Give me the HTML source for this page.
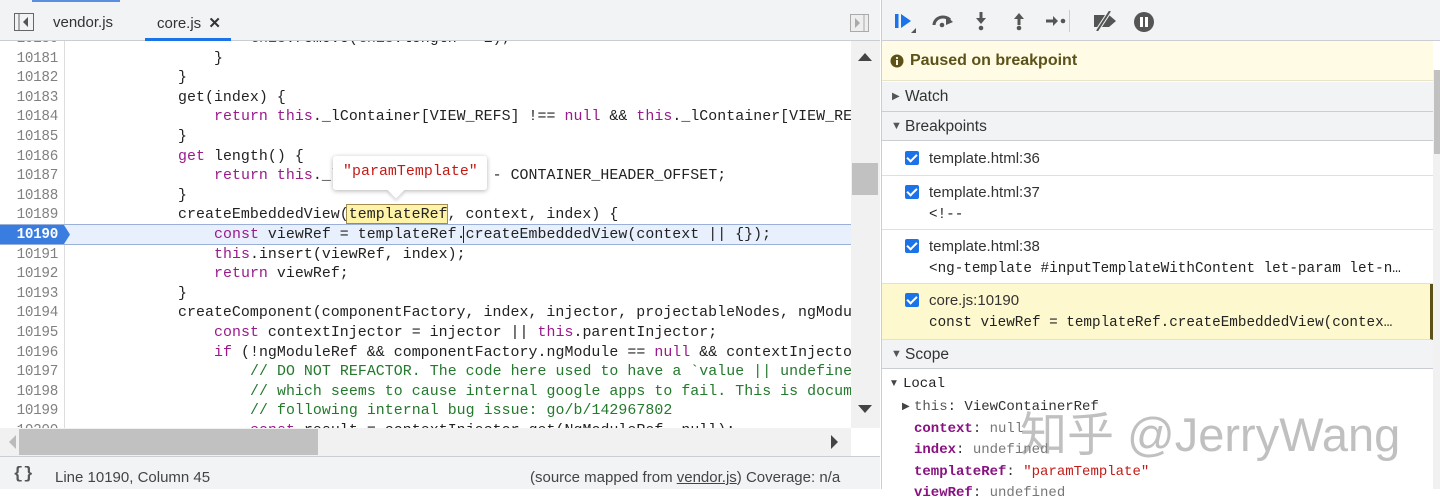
<!DOCTYPE html>
<html><head><meta charset="utf-8"><style>
*{margin:0;padding:0;box-sizing:border-box}
body{width:1440px;height:489px;overflow:hidden;background:#fff;font-family:"Liberation Sans",sans-serif;position:relative;color:#333}
.abs{position:absolute}
.mono{font-family:"Liberation Mono",monospace}
#tabs{left:0;top:0;width:880px;height:41px;background:#f1f3f4;border-bottom:1px solid #cacdd1}
.tab{top:14px;font-size:15px;color:#333}
#code{left:0;top:41px;width:851px;height:387px;overflow:hidden;background:#fff}
.ln{position:absolute;left:0;width:64px;text-align:right;padding-right:6px;font-size:14.3px;color:#808080;font-family:"Liberation Mono",monospace;height:19.6px;line-height:19.6px;letter-spacing:-0.3px}
.cl{position:absolute;font-size:14.9px;white-space:pre;font-family:"Liberation Mono",monospace;height:19.6px;line-height:19.6px;color:#222;letter-spacing:0.05px}
.k{color:#9a1a8c}.s{color:#c41a16}.c{color:#23792c}
.gut{left:64px;top:0;width:1px;height:387px;background:#ddd}
#vs{left:851px;top:41px;width:29px;height:387px;background:#f1f1f1}
#hs{left:0;top:428px;width:851px;height:28px;background:#f1f1f1}
#status{left:0;top:456px;width:880px;height:33px;background:#f1f3f4;border-top:1px solid #cacdd1;font-size:15px;color:#444}
#right{left:881px;top:0;width:559px;height:489px;border-left:1px solid #cacdd1;background:#fff}
.sec{position:absolute;left:0;width:551px;background:#f1f3f4;border-bottom:1px solid #cacdd1;font-size:15.5px;color:#333}
.cb{position:absolute;left:23px;width:14px;height:14px;background:#1a73e8;border-radius:2px}
.cb:after{content:"";position:absolute;left:4px;top:1px;width:4px;height:8px;border:solid #fff;border-width:0 2px 2px 0;transform:rotate(45deg)}
.bp{position:absolute;left:0;width:551px;border-bottom:1px solid #e0e0e0;background:#fff}
.bt{position:absolute;left:47px;font-size:15px;color:#333}
.bm{position:absolute;left:47px;font-size:14.3px;white-space:pre;color:#222;font-family:"Liberation Mono",monospace}
.sc{position:absolute;font-size:14px;font-family:"Liberation Mono",monospace;white-space:pre}
.sk{color:#881280;font-weight:bold}
</style></head><body>
<div id="tabs" class="abs">
 <svg class="abs" style="left:14px;top:13px" width="20" height="18"><rect x="0.5" y="0.5" width="19" height="17" fill="none" stroke="#666"/><line x1="5" y1="1" x2="5" y2="17" stroke="#666"/><path d="M14 4 L9 9 L14 14Z" fill="#555"/></svg>
 <div class="abs tab" style="left:53px">vendor.js</div>
 <div class="abs tab" style="left:157px">core.js <span style="font-weight:bold;margin-left:3px">✕</span></div>
 <div class="abs" style="left:145px;top:38px;width:86px;height:3px;background:#1a73e8"></div>
 <div class="abs" style="left:32px;top:0;width:88px;height:2px;background:#5b8ee0"></div>
 <svg class="abs" style="left:850px;top:14px" width="19" height="18"><rect x="0.5" y="0.5" width="18" height="17" fill="#eee" stroke="#aaa"/><line x1="14" y1="1" x2="14" y2="17" stroke="#aaa"/><path d="M5 4 L10 9 L5 14Z" fill="#aaa"/></svg>
</div>

<div id="code" class="abs">
 <div class="abs gut"></div>
 <div class="abs" style="left:0;top:183px;width:851px;height:21px;background:#e8f0fe;border-top:1px solid #9bb0d8;border-bottom:1px solid #9bb0d8"></div>
 <svg class="abs" style="left:0;top:184px" width="72" height="19"><path d="M0 0 H64 L70 9.5 L64 19 H0Z" fill="#3a7de0"/></svg>
 <div class="abs" style="left:346px;top:163px;width:102px;height:20px;background:#fff3a8;border:1px solid #a08c50"></div>
 <div class="abs" style="left:463px;top:185px;width:1px;height:17px;background:#222"></div>

 <div class="ln" style="top:-11px">10180</div><div class="cl" style="left:250px;top:-11px"><span class="k">this</span>.remove(<span class="k">this</span>.length - 1);</div>
 <div class="ln" style="top:8.6px">10181</div><div class="cl" style="left:214px;top:8.6px">}</div>
 <div class="ln" style="top:28.2px">10182</div><div class="cl" style="left:178px;top:28.2px">}</div>
 <div class="ln" style="top:47.8px">10183</div><div class="cl" style="left:178px;top:47.8px">get(index) {</div>
 <div class="ln" style="top:67.4px">10184</div><div class="cl" style="left:214px;top:67.4px"><span class="k">return</span> <span class="k">this</span>._lContainer[VIEW_REFS] !== <span class="k">null</span> &amp;&amp; <span class="k">this</span>._lContainer[VIEW_REFS]</div>
 <div class="ln" style="top:87px">10185</div><div class="cl" style="left:178px;top:87px">}</div>
 <div class="ln" style="top:106.6px">10186</div><div class="cl" style="left:178px;top:106.6px"><span class="k">get</span> length() {</div>
 <div class="ln" style="top:126.2px">10187</div><div class="cl" style="left:214px;top:126.2px"><span class="k">return</span> <span class="k">this</span>._lContainer.length - CONTAINER_HEADER_OFFSET;</div>
 <div class="ln" style="top:145.8px">10188</div><div class="cl" style="left:178px;top:145.8px">}</div>
 <div class="ln" style="top:165.4px">10189</div><div class="cl" style="left:178px;top:165.4px">createEmbeddedView(templateRef, context, index) {</div>
 <div class="ln" style="top:185px;color:#fff;font-weight:bold">10190</div><div class="cl" style="left:214px;top:185px"><span class="k">const</span> viewRef = templateRef.createEmbeddedView(context || {});</div>
 <div class="ln" style="top:204.6px">10191</div><div class="cl" style="left:214px;top:204.6px"><span class="k">this</span>.insert(viewRef, index);</div>
 <div class="ln" style="top:224.2px">10192</div><div class="cl" style="left:214px;top:224.2px"><span class="k">return</span> viewRef;</div>
 <div class="ln" style="top:243.8px">10193</div><div class="cl" style="left:178px;top:243.8px">}</div>
 <div class="ln" style="top:263.4px">10194</div><div class="cl" style="left:178px;top:263.4px">createComponent(componentFactory, index, injector, projectableNodes, ngModuleRef) {</div>
 <div class="ln" style="top:283px">10195</div><div class="cl" style="left:214px;top:283px"><span class="k">const</span> contextInjector = injector || <span class="k">this</span>.parentInjector;</div>
 <div class="ln" style="top:302.6px">10196</div><div class="cl" style="left:214px;top:302.6px"><span class="k">if</span> (!ngModuleRef &amp;&amp; componentFactory.ngModule == <span class="k">null</span> &amp;&amp; contextInjector) {</div>
 <div class="ln" style="top:322.2px">10197</div><div class="cl c" style="left:250px;top:322.2px">// DO NOT REFACTOR. The code here used to have a `value || undefined`</div>
 <div class="ln" style="top:341.8px">10198</div><div class="cl c" style="left:250px;top:341.8px">// which seems to cause internal google apps to fail. This is documented</div>
 <div class="ln" style="top:361.4px">10199</div><div class="cl c" style="left:250px;top:361.4px">// following internal bug issue: go/b/142967802</div>
 <div class="ln" style="top:381px">10200</div><div class="cl" style="left:250px;top:381px"><span class="k">const</span> result = contextInjector.get(NgModuleRef, null);</div>

 <div class="abs" style="left:333px;top:115px;width:154px;height:34px;background:#fff;border-radius:3px;box-shadow:0 1px 5px rgba(0,0,0,.3)"></div>
 <div class="abs" style="left:390px;top:143px;width:12px;height:12px;background:#fff;transform:rotate(45deg);box-shadow:2px 2px 3px rgba(0,0,0,.15)"></div>
 <div class="abs" style="left:333px;top:115px;width:154px;height:34px;background:#fff;border-radius:3px"></div>
 <div class="cl s" style="left:343px;top:122px">"paramTemplate"</div>
</div>

<div id="vs" class="abs">
 <svg class="abs" style="left:7px;top:11px" width="14" height="10"><path d="M0 9 L7 1 L14 9Z" fill="#444"/></svg>
 <div class="abs" style="left:1px;top:122px;width:26px;height:32px;background:#c1c1c1"></div>
 <svg class="abs" style="left:7px;top:363px" width="14" height="10"><path d="M0 1 L7 9 L14 1Z" fill="#444"/></svg>
</div>
<div id="hs" class="abs">
 <svg class="abs" style="left:9px;top:7px" width="8" height="14"><path d="M7 0 L0 7 L7 14Z" fill="#bbb"/></svg>
 <div class="abs" style="left:19px;top:1px;width:299px;height:26px;background:#c1c1c1"></div>
 <svg class="abs" style="left:831px;top:7px" width="8" height="14"><path d="M0 0 L7 7 L0 14Z" fill="#444"/></svg>
</div>
<div id="status" class="abs">
 <div class="abs" style="left:13px;top:8px;font-size:17px;font-weight:bold;color:#555;font-family:'Liberation Mono',monospace">{}</div>
 <div class="abs" style="left:55px;top:12px">Line 10190, Column 45</div>
 <div class="abs" style="left:530px;top:12px">(source mapped from <u>vendor.js</u>) Coverage: n/a</div>
</div>

<div id="right" class="abs">
 <div class="abs" style="left:0;top:0;width:559px;height:41px;background:#f1f3f4;border-bottom:1px solid #cacdd1"></div>
 <svg class="abs" style="left:12px;top:12px" width="24" height="22"><rect x="1" y="2" width="3.5" height="14" fill="#1a73e8"/><path d="M7 2 L17 9 L7 16Z" fill="#1a73e8"/><path d="M22 16 L22 21 L17 21Z" fill="#555"/></svg>
 <svg class="abs" style="left:49px;top:13px" width="24" height="16"><path d="M3 12 A9 8 0 0 1 19 7" fill="none" stroke="#555" stroke-width="3"/><path d="M15 3 L22 9 L15 12Z" fill="#555"/><circle cx="11" cy="12" r="2.3" fill="#555"/></svg>
 <svg class="abs" style="left:91px;top:11px" width="16" height="20"><rect x="6.5" y="1" width="3" height="8" fill="#555"/><path d="M3 7 L13 7 L8 13Z" fill="#555"/><circle cx="8" cy="17" r="2.3" fill="#555"/></svg>
 <svg class="abs" style="left:129px;top:11px" width="16" height="20"><rect x="6.5" y="6" width="3" height="8" fill="#555"/><path d="M3 8 L13 8 L8 2Z" fill="#555"/><circle cx="8" cy="17" r="2.3" fill="#555"/></svg>
 <svg class="abs" style="left:163px;top:13px" width="22" height="16"><rect x="1" y="6.5" width="8" height="3" fill="#555"/><path d="M8 3 L8 13 L13 8Z" fill="#555"/><circle cx="18" cy="8" r="2.3" fill="#555"/></svg>
 <div class="abs" style="left:187px;top:10px;width:1px;height:22px;background:#ccc"></div>
 <svg class="abs" style="left:211px;top:11px" width="26" height="20"><path d="M1 4 H16 L23 10 L16 16 H1Z" fill="#555"/><line x1="4" y1="20" x2="17" y2="0" stroke="#f1f3f4" stroke-width="4"/><line x1="4" y1="20" x2="17" y2="0" stroke="#555" stroke-width="2"/></svg>
 <svg class="abs" style="left:251px;top:11px" width="22" height="22"><circle cx="11" cy="11" r="10" fill="#555"/><rect x="7" y="6" width="3" height="10" fill="#fff"/><rect x="12" y="6" width="3" height="10" fill="#fff"/></svg>

 <div class="abs" style="left:0;top:41px;width:551px;height:40px;background:#fffbe5;border-bottom:1px solid #e8e4c8"></div>
 <svg class="abs" style="left:8px;top:54px" width="14" height="14"><circle cx="7" cy="7" r="6.5" fill="#5c5219"/><rect x="6" y="6" width="2" height="5" fill="#fffbe5"/><circle cx="7" cy="4" r="1.1" fill="#fffbe5"/></svg>
 <div class="abs" style="left:28px;top:52px;font-size:16px;font-weight:bold;color:#5c5219">Paused on breakpoint</div>

 <div class="sec" style="top:82px;height:30px"><span class="abs" style="left:10px;top:9px;font-size:10px;color:#555">▶</span><span class="abs" style="left:23px;top:6px">Watch</span></div>
 <div class="sec" style="top:112px;height:29px"><span class="abs" style="left:9px;top:8px;font-size:11px;color:#555">▼</span><span class="abs" style="left:23px;top:6px">Breakpoints</span></div>

 <div class="bp" style="top:142px;height:34px"><div class="cb" style="top:9px"></div><div class="bt" style="top:8px">template.html:36</div></div>
 <div class="bp" style="top:176px;height:54px"><div class="cb" style="top:9px"></div><div class="bt" style="top:8px">template.html:37</div><div class="bm" style="top:31px">&lt;!--</div></div>
 <div class="bp" style="top:230px;height:54px"><div class="cb" style="top:9px"></div><div class="bt" style="top:8px">template.html:38</div><div class="bm" style="top:31px">&lt;ng-template #inputTemplateWithContent let-param let-n…</div></div>
 <div class="bp" style="top:284px;height:56px;background:#fef8cf;border-right:3px solid #5c5219"><div class="cb" style="top:9px"></div><div class="bt" style="top:8px">core.js:10190</div><div class="bm" style="top:31px">const viewRef = templateRef.createEmbeddedView(contex…</div></div>

 <div class="sec" style="top:340px;height:29px"><span class="abs" style="left:9px;top:8px;font-size:11px;color:#555">▼</span><span class="abs" style="left:23px;top:6px">Scope</span></div>
 <div class="abs" style="left:7px;top:378px;font-size:10px;color:#444">▼</div>
 <div class="sc" style="left:21px;top:376px;color:#222">Local</div>
 <div class="abs" style="left:20px;top:401px;font-size:10px;color:#444">▶</div>
 <div class="sc" style="left:32px;top:399px"><span style="color:#555">this</span>: ViewContainerRef</div>
 <div class="sc" style="left:32px;top:421px"><span class="sk">context</span>: <span style="color:#777">null</span></div>
 <div class="sc" style="left:32px;top:442px"><span class="sk">index</span>: <span style="color:#777">undefined</span></div>
 <div class="sc" style="left:32px;top:464px"><span class="sk">templateRef</span>: <span style="color:#c41a16">"paramTemplate"</span></div>
 <div class="sc" style="left:32px;top:485px"><span class="sk">viewRef</span>: <span style="color:#777">undefined</span></div>
 <div class="abs" style="left:551px;top:70px;width:8px;height:419px;background:#f1f1f1"></div>
 <div class="abs" style="left:552px;top:70px;width:6px;height:84px;background:#c1c1c1"></div>
 <div class="abs" style="left:138px;top:396px;font-size:47px;color:rgba(140,140,140,.55);font-family:'Liberation Sans','Noto Sans CJK SC',sans-serif;white-space:nowrap">知乎 @JerryWang</div>
</div>
</body></html>
